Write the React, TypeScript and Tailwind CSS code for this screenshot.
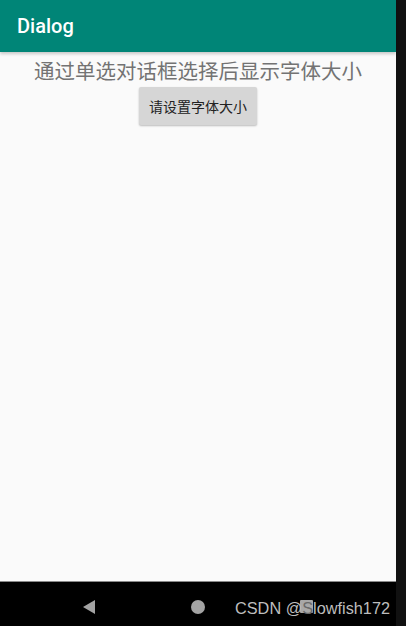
export default function App() {
  return (
    <div className="flex h-[626px] w-[406px] bg-[#111111]" style={{ fontFamily: 'Roboto, "Noto Sans CJK SC", sans-serif' }}>
      <div className="flex w-[396px] flex-col">
        {/* toolbar */}
        <div className="relative z-10 flex h-[52px] items-center bg-[#008577] pl-[17px] shadow-[0_2px_3px_rgba(0,0,0,0.2)]">
          <span className="text-[20px] font-medium text-white">Dialog</span>
        </div>
        {/* content */}
        <div className="flex flex-1 flex-col items-center bg-[#fafafa]">
          <p className="mt-[5px] text-[20.5px] leading-[26px] text-[#737373]" style={{ fontFamily: '"Noto Sans CJK SC", sans-serif' }}>
            通过单选对话框选择后显示字体大小
          </p>
          <button className="mt-[4px] flex h-[38px] w-[118px] items-center justify-center rounded-[2px] bg-[#d6d6d6] text-[14px] text-[#222222] shadow-[0_1px_2px_rgba(0,0,0,0.25)]" style={{ fontFamily: '"Noto Sans CJK SC", sans-serif' }}>
            请设置字体大小
          </button>
        </div>
        {/* navigation bar */}
        <div className="relative h-[45px] border-t border-[#8a8a8a] bg-black">
          <svg className="absolute left-[83px] top-[18px]" width="12" height="14" viewBox="0 0 12 14">
            <polygon points="12,0 12,14 0,7" fill="#a3a3a3" />
          </svg>
          <div className="absolute left-[191px] top-[18px] h-[14px] w-[14px] rounded-full bg-[#a3a3a3]" />
          <div className="absolute left-[300px] top-[18px] h-[13px] w-[13px] rounded-[1px] bg-[#a8a8a8]" />
          <span className="absolute left-[235px] top-[16px] text-[16.3px] leading-[20px] text-[#bdbdbd]" style={{ fontFamily: '"Liberation Sans", sans-serif' }}>
            CSDN @<span className="text-[#6a6a6a]">S</span>lowfish172
          </span>
        </div>
      </div>
    </div>
  );
}
